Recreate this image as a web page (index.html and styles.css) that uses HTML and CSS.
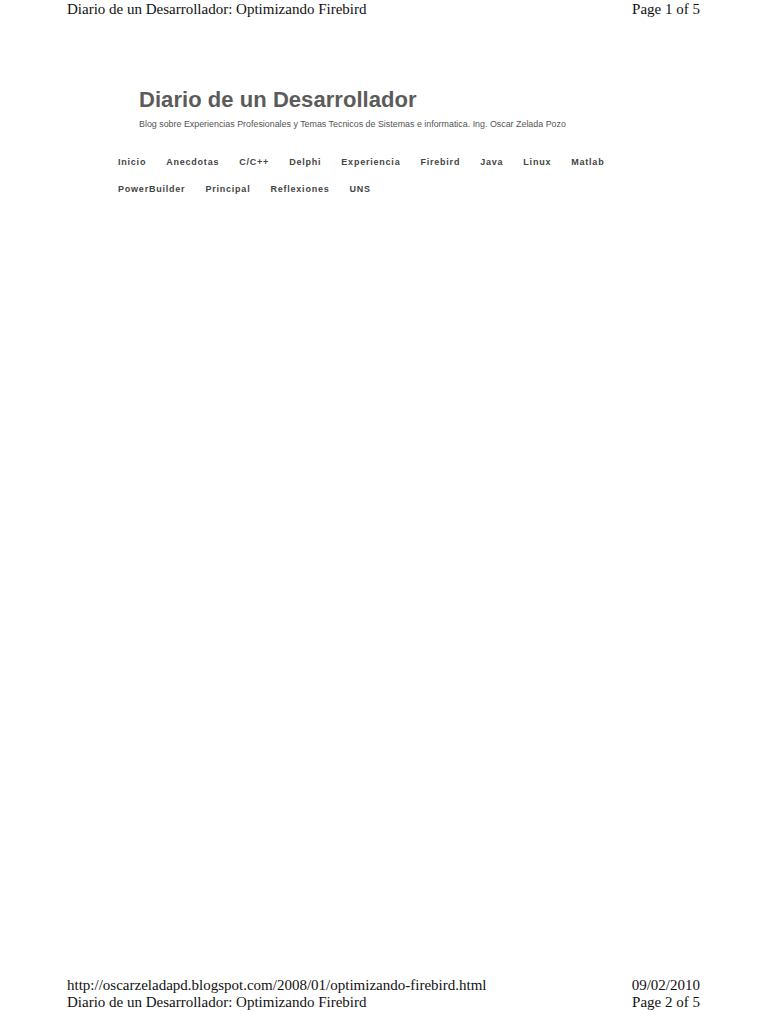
FILE: index.html
```html
<!DOCTYPE html>
<html lang="es">
<head>
<meta charset="utf-8">
<title>Diario de un Desarrollador: Optimizando Firebird</title>
<link rel="stylesheet" href="styles.css">
</head>
<body>
<div class="page">
  <header class="print-head">
    <span>Diario de un Desarrollador: Optimizando Firebird</span>
    <span>Page 1 of 5</span>
  </header>
  <main class="content">
    <div class="blog-header">
      <h1 class="blog-title">Diario de un Desarrollador</h1>
      <p class="blog-desc">Blog sobre Experiencias Profesionales y Temas Tecnicos de Sistemas e informatica. Ing. Oscar Zelada Pozo</p>
    </div>
    <nav class="nav">
      <a>Inicio</a>
      <a>Anecdotas</a>
      <a>C/C++</a>
      <a>Delphi</a>
      <a>Experiencia</a>
      <a>Firebird</a>
      <a>Java</a>
      <a>Linux</a>
      <a>Matlab</a>
      <a>PowerBuilder</a>
      <a>Principal</a>
      <a>Reflexiones</a>
      <a>UNS</a>
    </nav>
  </main>
  <footer class="print-foot">
    <div class="foot-row">
      <span>http://oscarzeladapd.blogspot.com/2008/01/optimizando-firebird.html</span>
      <span>09/02/2010</span>
    </div>
    <div class="foot-row">
      <span>Diario de un Desarrollador: Optimizando Firebird</span>
      <span>Page 2 of 5</span>
    </div>
  </footer>
</div>
</body>
</html>
```

FILE: styles.css
```css
* { box-sizing: border-box; }
html, body {
  margin: 0;
  padding: 0;
  background: #fff;
}
.page {
  width: 768px;
  height: 1024px;
  display: flex;
  flex-direction: column;
  padding: 0 68px 0 67px;
  font-family: "Liberation Serif", "Times New Roman", serif;
  color: #111;
}
.print-head {
  display: flex;
  justify-content: space-between;
  font-size: 15px;
  line-height: 17px;
  padding-top: 1px;
}
.content {
  flex: 1;
  font-family: "Liberation Sans", Arial, sans-serif;
  padding: 70px 0 0 51px;
}
.blog-header {
  padding-left: 21px;
}
.blog-title {
  margin: 0;
  font-size: 22px;
  line-height: 24px;
  font-weight: bold;
  color: #5b5b5b;
  letter-spacing: 0.05px;
}
.blog-desc {
  margin: 7px 0 0;
  font-size: 8.9px;
  line-height: 11px;
  color: #555;
}
.nav {
  margin-top: 27px;
  width: 520px;
  display: flex;
  flex-wrap: wrap;
  column-gap: 20px;
  row-gap: 16px;
  font-size: 9px;
  line-height: 11px;
  font-weight: bold;
  letter-spacing: 0.78px;
  color: #444;
}
.print-foot {
  font-size: 15px;
  line-height: 17px;
  padding-bottom: 13px;
}
.foot-row {
  display: flex;
  justify-content: space-between;
}
```
